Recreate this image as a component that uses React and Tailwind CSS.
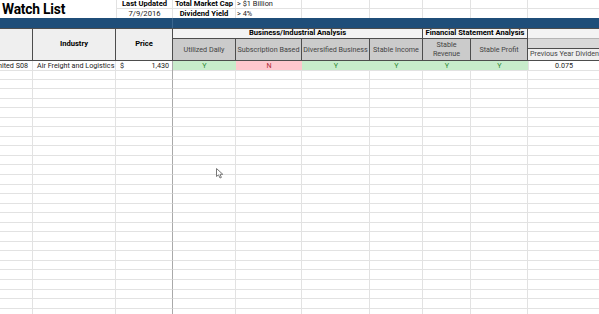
import React from "react";

const COLS = "grid grid-cols-[33px_83px_57px_63px_66px_68px_53px_48px_57px_71px]";
const LIGHT = "border-r border-b border-[#e2e2e2]";

function EmptyRow() {
  return (
    <div className={`${COLS} h-[9.55px]`}>
      <div className={LIGHT} />
      <div className={LIGHT} />
      <div className="border-r border-b border-b-[#e2e2e2] border-r-[#a9a9a9]" />
      <div className={LIGHT} />
      <div className={LIGHT} />
      <div className={LIGHT} />
      <div className={LIGHT} />
      <div className={LIGHT} />
      <div className={LIGHT} />
      <div className="border-b border-[#e2e2e2]" />
    </div>
  );
}

const subHead =
  "row-span-2 bg-[#cbcbcb] border-r border-b border-[#4d4d4d] flex items-center justify-center text-center text-[7.2px] leading-[9px] text-[#444]";
const mainHead =
  "row-span-3 bg-[#efefef] border-r border-b border-[#4d4d4d] flex items-center justify-center text-[7.6px] font-bold text-[#000]";
const groupHead =
  "bg-[#f3f3f3] border-r border-b border-[#4d4d4d] flex items-center justify-center text-[7.6px] font-bold text-[#000] whitespace-nowrap";

export default function App() {
  const rows = Array.from({ length: 27 });
  return (
    <div className="relative w-[599px] h-[314px] overflow-hidden bg-white font-['Roboto','Liberation_Sans',sans-serif] text-[#222]">
      {/* Title rows */}
      <div className={`${COLS} grid-rows-[9px_9px] h-[18px]`}>
        <div className="col-span-2 row-span-2 flex items-center pl-[2px] pt-[1px] text-[13.8px] font-bold text-[#000] leading-none tracking-[-0.2px]">
          Watch List
        </div>
        <div className={`${LIGHT} border-l flex items-center justify-center text-[7.6px] font-bold text-[#000] whitespace-nowrap`}>
          Last Updated
        </div>
        <div className={`${LIGHT} flex items-center justify-center text-[7.6px] font-bold text-[#000] whitespace-nowrap`}>
          Total Market Cap
        </div>
        <div className={`${LIGHT} flex items-center pl-[1px] text-[7.4px] text-[#222] whitespace-nowrap`}>
          &gt; $1 Billion
        </div>
        <div className={LIGHT} />
        <div className={LIGHT} />
        <div className={LIGHT} />
        <div className={LIGHT} />
        <div className="border-b border-[#e2e2e2]" />
        <div className="border-r border-l border-[#e2e2e2] flex items-center justify-center text-[7.6px] text-[#222]">
          7/9/2016
        </div>
        <div className="border-r border-[#e2e2e2] flex items-center justify-center text-[7.6px] font-bold text-[#000] whitespace-nowrap">
          Dividend Yield
        </div>
        <div className="border-r border-[#e2e2e2] flex items-center pl-[1px] text-[7.4px] text-[#222]">
          &gt; 4%
        </div>
        <div className="border-r border-[#e2e2e2]" />
        <div className="border-r border-[#e2e2e2]" />
        <div className="border-r border-[#e2e2e2]" />
        <div className="border-r border-[#e2e2e2]" />
        <div />
      </div>

      {/* Blue band */}
      <div className="grid grid-cols-[173px_1fr] h-[9.5px] bg-[#1f4e79]">
        <div className="border-r border-[#3b6790]" />
        <div />
      </div>

      {/* Header */}
      <div className={`${COLS} grid-rows-[10px_10px_12px] border-t border-[#4d4d4d]`}>
        <div className={mainHead} />
        <div className={mainHead}>Industry</div>
        <div className={mainHead}>Price</div>
        <div className={`${groupHead} col-span-4`}>Business/Industrial Analysis</div>
        <div className={`${groupHead} col-span-2`}>Financial Statement Analysis</div>
        <div className="bg-[#f3f3f3] border-b border-[#b5b5b5]" />
        <div className={subHead}>Utilized Daily</div>
        <div className={subHead}>Subscription Based</div>
        <div className={subHead}>Diversified Business</div>
        <div className={subHead}>Stable Income</div>
        <div className={subHead}>
          Stable
          <br />
          Revenue
        </div>
        <div className={subHead}>Stable Profit</div>
        <div className="bg-[#d9d9d9] border-b border-[#4d4d4d]" />
        <div className="bg-[#eeeeee] border-b border-[#4d4d4d] flex items-center pl-[2px] text-[7.2px] text-[#444] whitespace-nowrap overflow-hidden">
          Previous Year Dividend
        </div>
      </div>

      {/* Data row */}
      <div className={`${COLS} h-[9.5px] text-[7.2px] leading-[9px]`}>
        <div className={`${LIGHT} flex justify-end pr-[4px] overflow-hidden whitespace-nowrap text-[#222]`}>
          nited S08
        </div>
        <div className={`${LIGHT} pl-[4px] whitespace-nowrap text-[#222]`}>Air Freight and Logistics</div>
        <div className="border-r border-b border-b-[#e2e2e2] border-r-[#a9a9a9] flex justify-between pl-[4px] pr-[3px] text-[#222]">
          <span>$</span>
          <span>1,430</span>
        </div>
        <div className="bg-[#c8eccb] border-b border-b-[#e2e2e2] text-center text-[#2f8a36]">Y</div>
        <div className="bg-[#fec8ce] border-b border-b-[#e2e2e2] text-center text-[#b32d38]">N</div>
        <div className="bg-[#c8eccb] border-b border-b-[#e2e2e2] text-center text-[#2f8a36]">Y</div>
        <div className="bg-[#c8eccb] border-b border-b-[#e2e2e2] text-center text-[#2f8a36]">Y</div>
        <div className="bg-[#c8eccb] border-b border-b-[#e2e2e2] text-center text-[#2f8a36]">Y</div>
        <div className="bg-[#c8eccb] border-b border-b-[#e2e2e2] text-center text-[#2f8a36]">Y</div>
        <div className="border-b border-l border-[#e2e2e2] text-center text-[#222]">0.075</div>
      </div>

      {rows.map((_, i) => (
        <EmptyRow key={i} />
      ))}

      {/* Mouse cursor */}
      <svg className="absolute left-[216px] top-[168px]" width="8" height="11" viewBox="0 0 8 11">
        <path d="M0.5 0.5 L0.5 8.5 L2.5 6.8 L4 10 L5.4 9.4 L4 6.3 L6.8 6.3 Z" fill="#fff" stroke="#777" strokeWidth="1" strokeLinejoin="round" />
      </svg>
    </div>
  );
}
